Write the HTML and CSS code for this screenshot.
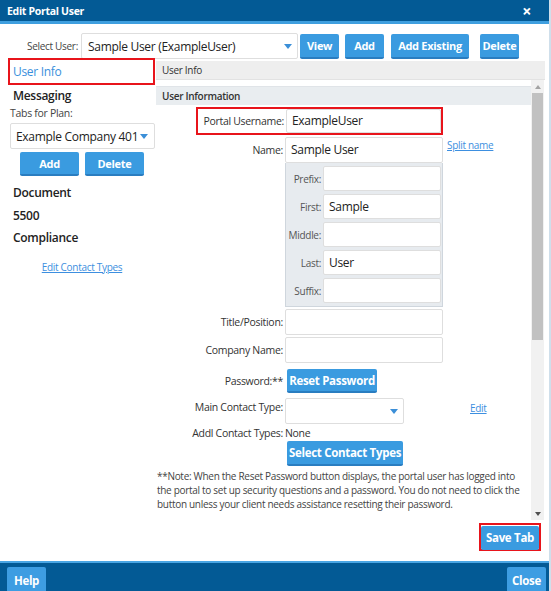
FILE: index.html
```html
<!DOCTYPE html>
<html lang="en">
<head>
  <meta charset="UTF-8">
  <meta name="viewport" content="width=device-width, initial-scale=1.0">
  <title>Edit Portal User</title>
  <link rel="stylesheet" href="styles.css">
</head>
<body>
  <div class="dialog">
    <!-- Barra de título -->
    <div class="titlebar">
      <span class="title">Edit Portal User</span>
      <span class="close">&times;</span>
    </div>

    <!-- Seleção de usuário -->
    <div class="toolbar">
      <span class="toolbar-label">Select User:</span>
      <div class="select user-select"><span>Sample User (ExampleUser)</span><i class="caret"></i></div>
      <button class="btn btn-view">View</button>
      <button class="btn btn-add">Add</button>
      <button class="btn btn-existing">Add Existing</button>
      <button class="btn btn-delete">Delete</button>
    </div>

    <div class="main">
      <!-- Coluna da esquerda -->
      <div class="sidebar">
        <div class="side-tab">User Info</div>
        <div class="side-item side-messaging">Messaging</div>
        <div class="side-caption">Tabs for Plan:</div>
        <div class="select plan-select"><span>Example Company 401</span><i class="caret"></i></div>
        <div class="side-buttons">
          <button class="btn btn-side">Add</button>
          <button class="btn btn-side">Delete</button>
        </div>
        <div class="side-item side-first">Document</div>
        <div class="side-item">5500</div>
        <div class="side-item">Compliance</div>
        <a class="link side-link" href="#">Edit Contact Types</a>
      </div>

      <!-- Painel da direita -->
      <div class="panel">
        <div class="panel-tab">User Info</div>
        <div class="panel-body">
          <div class="content">
            <div class="section-header">User Information</div>

            <div class="row row-highlight">
              <span class="label">Portal Username:</span>
              <div class="field">ExampleUser</div>
            </div>

            <div class="row row-name">
              <span class="label">Name:</span>
              <div class="field">Sample User</div>
              <a class="link split-link" href="#">Split name</a>
            </div>

            <div class="row">
              <span class="label"></span>
              <div class="name-parts">
                <div class="part"><span class="part-label">Prefix:</span><div class="field part-field"></div></div>
                <div class="part"><span class="part-label">First:</span><div class="field part-field">Sample</div></div>
                <div class="part"><span class="part-label">Middle:</span><div class="field part-field"></div></div>
                <div class="part"><span class="part-label">Last:</span><div class="field part-field">User</div></div>
                <div class="part"><span class="part-label">Suffix:</span><div class="field part-field"></div></div>
              </div>
            </div>

            <div class="row row-title">
              <span class="label">Title/Position:</span>
              <div class="field"></div>
            </div>

            <div class="row row-company">
              <span class="label">Company Name:</span>
              <div class="field"></div>
            </div>

            <div class="row row-password">
              <span class="label">Password:**</span>
              <button class="btn btn-form btn-reset">Reset Password</button>
            </div>

            <div class="row row-top row-contact">
              <span class="label">Main Contact Type:</span>
              <div class="select contact-select"><i class="caret"></i></div>
              <a class="link edit-link" href="#">Edit</a>
            </div>

            <div class="row row-top row-addl">
              <span class="label">Addl Contact Types:</span>
              <span class="value">None</span>
            </div>

            <div class="row row-types">
              <span class="label"></span>
              <button class="btn btn-form btn-types">Select Contact Types</button>
            </div>

            <p class="note">**Note: When the Reset Password button displays, the portal user has logged into<br>the portal to set up security questions and a password. You do not need to click the<br>button unless your client needs assistance resetting their password.</p>
          </div>

          <!-- Barra de rolagem -->
          <div class="scrollbar">
            <div class="arrow arrow-up"></div>
            <div class="thumb"></div>
            <div class="track"></div>
            <div class="arrow arrow-down"></div>
          </div>
        </div>
      </div>
    </div>

    <div class="actions">
      <div class="save-box"><button class="btn btn-save">Save Tab</button></div>
    </div>

    <!-- Rodapé -->
    <div class="footer">
      <button class="btn btn-footer">Help</button>
      <button class="btn btn-footer">Close</button>
    </div>
  </div>
</body>
</html>
```

FILE: styles.css
```css
body {
  margin: 0;
  overflow: hidden;
  font-family: "Open Sans", sans-serif;
  letter-spacing: -0.3px;
  color: #333;
  background: #fff;
}

.dialog {
  width: 549px;
  height: 591px;
  border-right: 2px solid #cfdfeb;
  display: flex;
  flex-direction: column;
  overflow: hidden;
}

/* Barra de título */
.titlebar {
  height: 21px;
  background-color: #035a95;
  border-bottom: 3px solid #3f9fdf;
  display: flex;
  justify-content: space-between;
  align-items: center;
  padding: 0 18px 0 7px;
  color: #fff;
  flex-shrink: 0;
}

.title {
  font-weight: bold;
  font-size: 10.5px;
}

.close {
  font-weight: bold;
  font-size: 16px;
  line-height: 16px;
}

/* Botões */
.btn {
  font-family: "Open Sans", sans-serif;
  letter-spacing: -0.3px;
  background-color: #3a9be0;
  color: #fff;
  font-weight: bold;
  font-size: 11px;
  border: 0;
  border-bottom: 2px solid #2a7dc0;
  border-radius: 2px;
  height: 25px;
  padding: 0 7px;
  white-space: nowrap;
  cursor: pointer;
}

.select {
  box-sizing: border-box;
  height: 26px;
  border: 1px solid #dedede;
  border-radius: 2px;
  background: #fff;
  display: flex;
  align-items: center;
  justify-content: space-between;
  font-size: 12px;
  color: #222;
  padding: 0 5px 0 6px;
  white-space: nowrap;
}

.caret {
  width: 0;
  height: 0;
  border-left: 4.5px solid transparent;
  border-right: 4.5px solid transparent;
  border-top: 5px solid #3b8fd8;
}

.link {
  color: #3d8fe0;
  font-size: 10px;
  text-decoration: underline;
}

/* Seleção de usuário */
.toolbar {
  display: flex;
  align-items: center;
  padding: 9px 0 0 27px;
  height: 26px;
  flex-shrink: 0;
}

.toolbar-label {
  font-size: 10px;
  color: #444;
  margin-right: 3px;
}

.user-select {
  width: 217px;
  margin-right: 2px;
}

.btn-view {
  width: 39px;
  margin-right: 6px;
}

.btn-add {
  width: 39px;
  margin-right: 7px;
}

.btn-existing {
  width: 78px;
  margin-right: 11px;
}

.btn-delete {
  width: 39px;
  padding: 0 1px;
}

/* Área principal */
.main {
  display: flex;
  padding-left: 8px;
  margin-top: -1px;
  height: 462px;
  flex-shrink: 0;
}

.sidebar {
  width: 148px;
  display: flex;
  flex-direction: column;
}

.side-tab {
  box-sizing: border-box;
  width: 147px;
  height: 27px;
  border: 2px solid #e8141b;
  color: #3a90dc;
  font-size: 12px;
  line-height: 23px;
  padding-left: 3px;
}

.side-item {
  font-size: 12px;
  font-weight: 600;
  color: #222;
  padding-left: 5px;
  line-height: 22.5px;
}

.side-messaging {
  line-height: 17px;
  margin-top: 2px;
}

.side-caption {
  font-size: 10.5px;
  color: #444;
  line-height: 14px;
  padding-left: 2px;
  margin-top: 2px;
}

.plan-select {
  width: 145px;
  margin: 3px 0 0 2px;
  padding: 0 6px 0 5px;
}

.side-buttons {
  display: flex;
  justify-content: center;
  gap: 6px;
  width: 148px;
  margin-top: 3px;
}

.btn-side {
  width: 59px;
  height: 24px;
}

.side-first {
  margin-top: 6px;
}

.side-link {
  align-self: center;
  margin-top: 10px;
  line-height: 14px;
}

/* Painel da direita */
.panel {
  width: 389px;
  display: flex;
  flex-direction: column;
}

.panel-tab {
  margin-top: 3px;
  height: 18px;
  line-height: 18px;
  background-color: #eeeeee;
  font-size: 10px;
  color: #333;
  padding-left: 6px;
  border-bottom: 1px solid #e2e2e2;
}

.panel-body {
  flex: 1;
  display: flex;
}

.content {
  width: 375px;
  overflow: hidden;
}

.section-header {
  margin-top: 6px;
  height: 18px;
  line-height: 18px;
  background-color: #e9edf0;
  font-size: 10px;
  font-weight: 600;
  color: #333;
  padding-left: 6px;
  border-top: 1px solid #e0e4e8;
}

.row {
  display: flex;
  align-items: center;
}

.row-top {
  align-items: flex-start;
}

.label {
  width: 129px;
  flex-shrink: 0;
  text-align: right;
  padding-right: 2px;
  box-sizing: border-box;
  font-size: 10.5px;
  line-height: 14px;
  color: #333;
  white-space: nowrap;
}

.field {
  box-sizing: border-box;
  width: 158px;
  height: 26px;
  border: 1px solid #dedede;
  border-radius: 2px;
  background: #fff;
  font-size: 12px;
  line-height: 24px;
  color: #222;
  padding: 0 5px;
}

.row-highlight {
  margin: 2px 0 0 40px;
  width: 247px;
  height: 28px;
  box-sizing: border-box;
  border: 2px solid #e8141b;
}

.row-highlight .label {
  width: 88px;
}

.row-highlight .field {
  width: 155px;
  height: 24px;
  line-height: 22px;
}

.row-name {
  margin-top: 2px;
  align-items: flex-start;
}

.row-name .label {
  line-height: 26px;
}

.split-link {
  margin: 1px 0 0 4px;
  line-height: 14px;
}

.name-parts {
  box-sizing: border-box;
  width: 158px;
  background-color: #e7ebef;
  border: 1px solid #cfd6dd;
  border-top: 0;
  padding: 3px 1px 3px 0;
  display: flex;
  flex-direction: column;
  gap: 3px;
}

.part {
  display: flex;
  align-items: center;
}

.part-label {
  width: 36px;
  text-align: right;
  font-size: 10px;
  color: #555;
  padding-right: 1px;
  box-sizing: border-box;
}

.part-field {
  width: 118px;
  height: 25px;
  line-height: 23px;
  margin-left: 1px;
}

.row-title {
  margin-top: 2px;
}

.row-company {
  margin-top: 2px;
}

.row-password {
  margin-top: 6px;
}

.btn-form {
  margin-left: 2px;
  font-size: 11.5px;
  padding: 0;
}

.btn-reset {
  width: 90px;
  height: 24px;
}

.btn-types {
  width: 116px;
}

.row-contact {
  margin-top: 5px;
}

.row-contact .label {
  margin-top: 2px;
}

.contact-select {
  width: 119px;
  justify-content: flex-end;
}

.edit-link {
  margin: 3px 0 0 66px;
  line-height: 14px;
}

.row-addl {
  margin-top: 2px;
}

.value {
  font-size: 10.5px;
  line-height: 14px;
  color: #333;
}

.row-types {
  margin-top: 1px;
}

.note {
  margin: 3px 0 0 1px;
  font-size: 10px;
  line-height: 14px;
  color: #444;
  white-space: nowrap;
}

/* Barra de rolagem */
.scrollbar {
  width: 13px;
  background-color: #f1f1f1;
  display: flex;
  flex-direction: column;
  align-items: center;
}

.arrow {
  height: 13px;
  width: 13px;
  display: flex;
  align-items: center;
  justify-content: center;
}

.arrow-up::before,
.arrow-down::before {
  content: "";
  border-left: 3.5px solid transparent;
  border-right: 3.5px solid transparent;
}

.arrow-up::before {
  border-bottom: 4px solid #a3a3a3;
}

.arrow-down::before {
  border-top: 4px solid #505050;
}

.thumb {
  width: 11px;
  height: 247px;
  background-color: #c1c1c1;
}

.track {
  flex: 1;
}

/* Salvar */
.actions {
  display: flex;
  justify-content: flex-end;
  padding: 3px 8px 0 0;
  height: 38px;
  flex-shrink: 0;
}

.save-box {
  border: 2px solid #e8141b;
  height: 24px;
}

.btn-save {
  width: 58px;
  height: 24px;
  border-bottom: 0;
  font-size: 11.5px;
  padding: 0;
}

/* Rodapé */
.footer {
  border-top: 2px solid #4aa6e4;
  background-color: #035a95;
  flex: 1;
  display: flex;
  justify-content: space-between;
  padding: 4px 3px 0 7px;
}

.btn-footer {
  width: 39px;
  height: 26px;
  background-color: #3d9de2;
  border-bottom: 0;
  padding: 0;
  font-size: 11.5px;
}
```
